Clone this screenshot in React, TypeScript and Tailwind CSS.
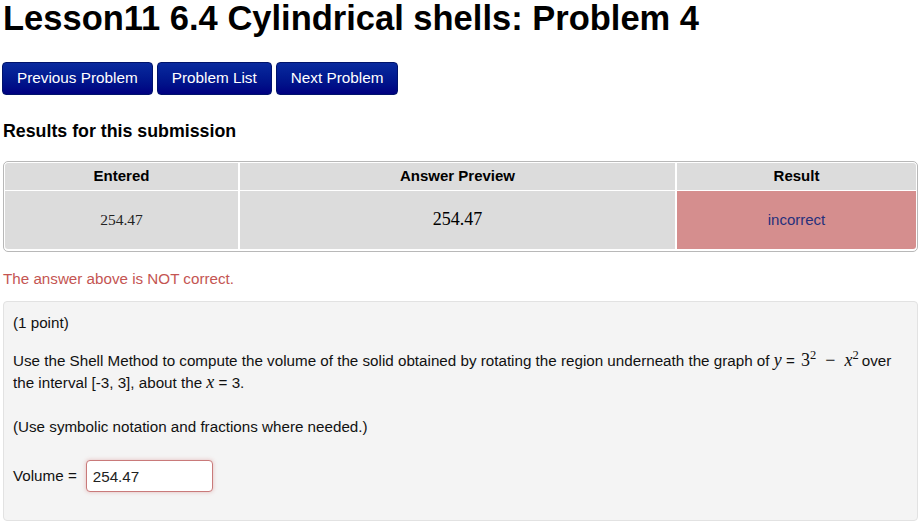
// WeBWorK problem page — submission results + problem statement
const sans = 'font-["Liberation_Sans",Arial,sans-serif]';
const serif = 'font-["Liberation_Serif","DejaVu_Serif",serif]';

function NavButton({ label }: { label: string }) {
  return (
    <button
      className={`h-[33px] px-[14px] rounded-[4px] border border-[#00136b] bg-linear-to-b from-[#0a2a9e] to-[#000080] text-white text-[15.3px] ${sans}`}
    >
      {label}
    </button>
  );
}

export default function App() {
  return (
    <div className={`w-[922px] h-[526px] overflow-hidden bg-white text-[#111] pl-[3px] pr-[4px] ${sans}`}>
      {/* title */}
      <h1 className="text-[34.5px] leading-[36px] font-bold text-black m-0">
        Lesson11 6.4 Cylindrical shells: Problem 4
      </h1>

      {/* nav */}
      <div className="mt-[26px] -ml-[1px] flex gap-[4px]">
        <NavButton label="Previous Problem" />
        <NavButton label="Problem List" />
        <NavButton label="Next Problem" />
      </div>

      <h2 className="mt-[25px] text-[17.8px] leading-[22px] font-bold text-black">
        Results for this submission
      </h2>

      {/* results table */}
      <div className="mt-[19px] border border-[#b8b8b8] rounded-[5px] p-[1px] pb-[2px] bg-white">
        <div className="grid grid-cols-[233px_435px_239px] gap-x-[2px] gap-y-[1px] text-[15px]">
          <div className="h-[27px] bg-[#dcdcdc] flex items-center justify-center font-bold text-black rounded-tl-[3px]">Entered</div>
          <div className="h-[27px] bg-[#dcdcdc] flex items-center justify-center font-bold text-black">Answer Preview</div>
          <div className="h-[27px] bg-[#dcdcdc] flex items-center justify-center font-bold text-black rounded-tr-[3px]">Result</div>
          <div className={`h-[58px] bg-[#dcdcdc] flex items-center justify-center text-[15.5px] text-[#222] rounded-bl-[3px] ${serif}`}>254.47</div>
          <div className={`h-[58px] bg-[#dcdcdc] flex items-center justify-center text-[18px] text-black pb-[2px] ${serif}`}>254.47</div>
          <div className="h-[58px] bg-[#d58e8e] flex items-center justify-center text-[#27307c] rounded-br-[3px] pt-[1px]">incorrect</div>
        </div>
      </div>

      <p className="mt-[16px] text-[15.2px] leading-[22px] text-[#c45552]">The answer above is NOT correct.</p>

      {/* problem */}
      <div className="mt-[11px] h-[220px] bg-[#f4f4f4] border border-[#e2e2e2] rounded-[4px] pt-[10px] px-[9px] text-[15.2px] leading-[22px] text-[#111]">
        <p>(1 point)</p>
        <p className="mt-[16px]">
          Use the Shell Method to compute the volume of the solid obtained by rotating the region underneath the graph of{' '}
          <span className={`${serif} italic text-[18px] leading-none`}>y</span> ={' '}
          <span className={`${serif} text-[18px] leading-none ml-[2px]`}>
            3<sup className="text-[12.5px] top-[-0.55em]">2</sup>
            <span className="mx-[9px]">−</span>
            <span className="italic">x</span>
            <sup className="text-[12.5px] top-[-0.55em] mr-[3px]">2</sup>
          </span>
          over the interval [-3, 3], about the <span className={`${serif} italic text-[18px] leading-none`}>x</span> = 3.
        </p>
        <p className="mt-[22px]">(Use symbolic notation and fractions where needed.)</p>
        <div className="mt-[22px] flex items-center gap-[9px]">
          <span>Volume =</span>
          <input
            readOnly
            value="254.47"
            className="w-[127px] h-[32px] px-[6px] bg-white border border-[#c97a7a] rounded-[4px] shadow-[0_0_4px_rgba(200,80,80,0.35)] text-[15.2px] text-[#222] outline-none"
          />
        </div>
      </div>
    </div>
  );
}
